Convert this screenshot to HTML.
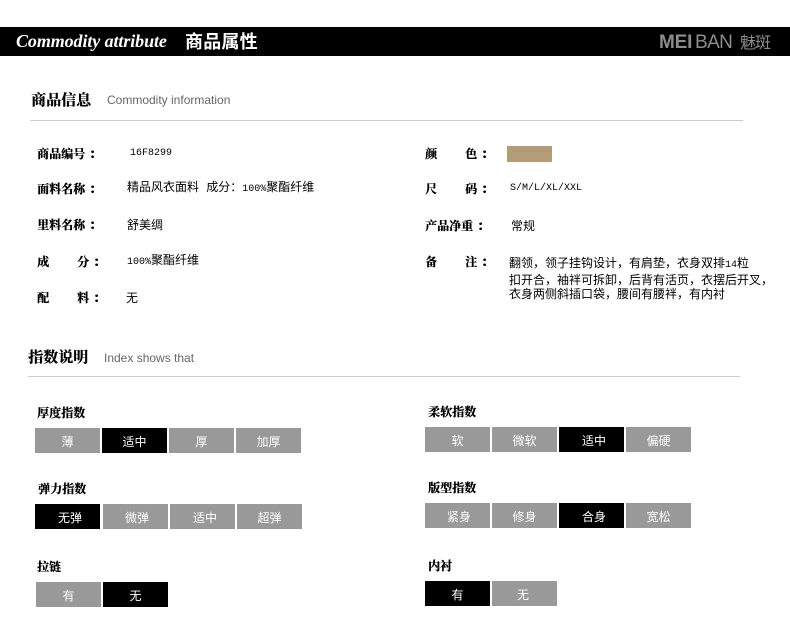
<!DOCTYPE html>
<html><head><meta charset="utf-8">
<style>
html,body{margin:0;padding:0;background:#fff}
#p{position:relative;width:790px;height:628px;overflow:hidden;background:#fff;font-family:"Liberation Sans","WenQuanYi Zen Hei","Noto Sans CJK SC",sans-serif}
#p div{position:absolute;white-space:nowrap}
.l{font-family:"Liberation Serif","Noto Serif CJK SC",serif;font-size:12px;font-weight:700;line-height:14px;color:#000;text-shadow:.4px 0 0 #000}
.l b{position:relative;left:4px}
.g{display:inline-block;width:28px}
.v{font-family:"Liberation Mono","WenQuanYi Zen Hei","Noto Sans CJK SC",monospace;font-size:12px;line-height:14px;color:#000}
.m{font-family:"Liberation Mono",monospace;font-size:10px}
.h{font-family:"Liberation Serif","Noto Serif CJK SC",serif;font-size:15px;font-weight:700;line-height:18px;color:#000;text-shadow:.4px 0 0 #000}
.e{font-size:12px;line-height:14px;color:#666}
.b{width:65px;height:25px;line-height:27px;text-align:center;background:#999;color:#fff;font-size:12px;font-family:"WenQuanYi Zen Hei","Noto Sans CJK SC",sans-serif}
.k{background:#000}
.t{font-family:"Liberation Serif","Noto Serif CJK SC",serif;font-size:12px;font-weight:700;line-height:14px;color:#000;text-shadow:.4px 0 0 #000}
</style></head><body><div id="p">
<div style="left:0;top:27px;width:790px;height:29px;background:#000"></div>
<div style="left:16px;top:31px;font:italic 700 18px/21px 'Liberation Serif',serif;color:#fff;letter-spacing:-.09px">Commodity attribute</div>
<div style="left:185px;top:32px;font:700 18px/21px 'Liberation Sans','Noto Sans CJK SC',sans-serif;color:#fff;letter-spacing:.2px">商品属性</div>
<div style="left:659px;top:32px;font:700 19px/21px 'Liberation Sans',sans-serif;color:#8c8c8c;letter-spacing:-.2px">MEI</div>
<div style="left:695px;top:32px;font:400 19px/21px 'Liberation Sans',sans-serif;color:#8c8c8c;letter-spacing:-.6px">BAN</div>
<div style="left:740px;top:32px;font:400 16px/19px 'Noto Sans CJK SC',sans-serif;color:#8c8c8c;letter-spacing:-1px">魅斑</div>

<div class="h" style="left:31px;top:92px">商品信息</div>
<div class="e" style="left:107px;top:93px">Commodity information</div>
<div style="left:30px;top:120px;width:713px;height:1px;background:#ccc"></div>

<div class="l" style="left:37px;top:147px">商品编号<b>：</b></div>
<div class="v" style="left:130px;top:147px;font-size:10px">16F8299</div>
<div class="l" style="left:37px;top:182px">面料名称<b>：</b></div>
<div class="v" style="left:127px;top:181px">精品风衣面料 成分：<span class="m">100%</span>聚酯纤维</div>
<div class="l" style="left:37px;top:218px">里料名称<b>：</b></div>
<div class="v" style="left:127px;top:219px">舒美绸</div>
<div class="l" style="left:37px;top:255px">成<span class="g"></span>分<b>：</b></div>
<div class="v" style="left:127px;top:254px"><span class="m">100%</span>聚酯纤维</div>
<div class="l" style="left:37px;top:291px">配<span class="g"></span>料<b>：</b></div>
<div class="v" style="left:126px;top:292px">无</div>

<div class="l" style="left:425px;top:147px">颜<span class="g"></span>色<b>：</b></div>
<div style="left:507px;top:146px;width:45px;height:16px;background:#b59c78"></div>
<div class="l" style="left:425px;top:182px">尺<span class="g"></span>码<b>：</b></div>
<div class="v" style="left:510px;top:182px;font-size:10px">S/M/L/XL/XXL</div>
<div class="l" style="left:425px;top:219px">产品净重<b>：</b></div>
<div class="v" style="left:511px;top:220px">常规</div>
<div class="l" style="left:425px;top:255px">备<span class="g"></span>注<b>：</b></div>
<div class="v" style="left:509px;top:257px;line-height:14.5px">翻领，领子挂钩设计，有肩垫，衣身双排<span class="m">14</span>粒<br>扣开合，袖袢可拆卸，后背有活页，衣摆后开叉，<br>衣身两侧斜插口袋，腰间有腰袢，有内衬</div>

<div class="h" style="left:28px;top:349px">指数说明</div>
<div class="e" style="left:104px;top:351px">Index shows that</div>
<div style="left:28px;top:376px;width:712px;height:1px;background:#ccc"></div>

<div class="t" style="left:37px;top:406px">厚度指数</div>
<div class="b" style="left:35px;top:428px">薄</div>
<div class="b k" style="left:102px;top:428px">适中</div>
<div class="b" style="left:169px;top:428px">厚</div>
<div class="b" style="left:236px;top:428px">加厚</div>

<div class="t" style="left:38px;top:482px">弹力指数</div>
<div class="b k" style="left:35px;top:504px;text-indent:5px">无弹</div>
<div class="b" style="left:103px;top:504px;text-indent:3px">微弹</div>
<div class="b" style="left:170px;top:504px;text-indent:5px">适中</div>
<div class="b" style="left:237px;top:504px">超弹</div>

<div class="t" style="left:37px;top:560px">拉链</div>
<div class="b" style="left:36px;top:582px">有</div>
<div class="b k" style="left:103px;top:582px">无</div>

<div class="t" style="left:428px;top:405px">柔软指数</div>
<div class="b" style="left:425px;top:427px">软</div>
<div class="b" style="left:492px;top:427px">微软</div>
<div class="b k" style="left:559px;top:427px;text-indent:5px">适中</div>
<div class="b" style="left:626px;top:427px">偏硬</div>

<div class="t" style="left:428px;top:481px">版型指数</div>
<div class="b" style="left:425px;top:503px;text-indent:3px">紧身</div>
<div class="b" style="left:492px;top:503px">修身</div>
<div class="b k" style="left:559px;top:503px;text-indent:5px">合身</div>
<div class="b" style="left:626px;top:503px">宽松</div>

<div class="t" style="left:428px;top:559px">内衬</div>
<div class="b k" style="left:425px;top:581px">有</div>
<div class="b" style="left:492px;top:581px;text-indent:-3px">无</div>
</div></body></html>
